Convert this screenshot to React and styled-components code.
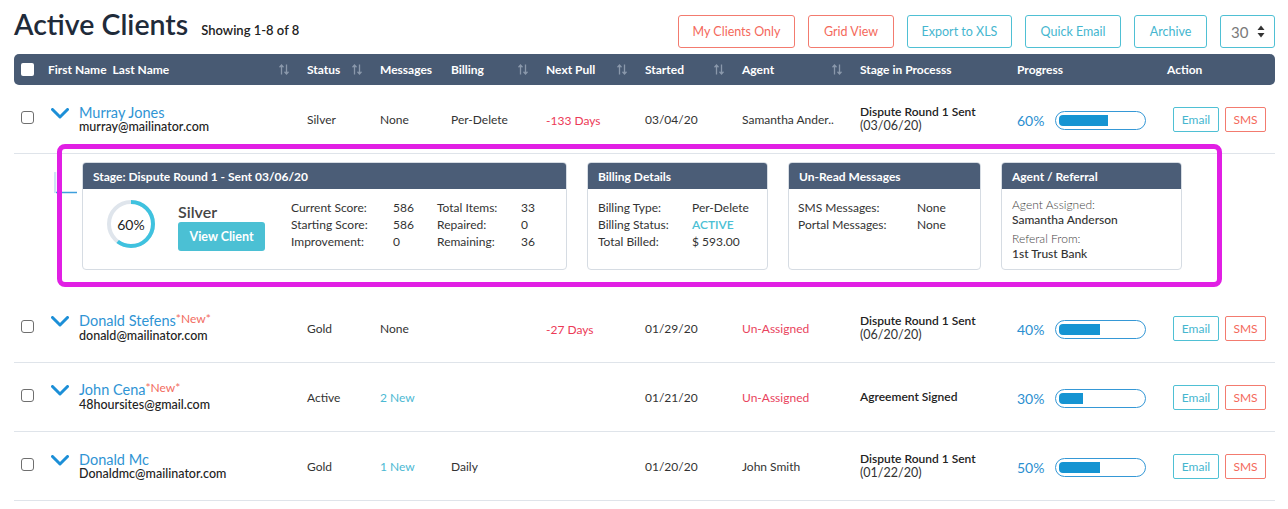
import React from "react";
import styled, { createGlobalStyle } from "styled-components";

const GlobalStyle = createGlobalStyle`
  body {
    margin: 0;
    background: #ffffff;
    font-family: Lato, "Open Sans", sans-serif;
    color: #333333;
  }
  button { font-family: Lato, "Open Sans", sans-serif; cursor: pointer; }
`;

const COLS = "34px 259px 73px 71px 95px 99px 97px 118px 157px 150px 1fr";

const Page = styled.div`
  padding: 0 13px 0 14px;
`;

const TopBar = styled.div`
  display: flex;
  justify-content: space-between;
  align-items: flex-start;
  height: 54px;
`;

const TitleWrap = styled.div`
  display: flex;
  align-items: baseline;
  gap: 13px;
  padding-top: 7px;
`;

const Title = styled.h1`
  margin: 0;
  font-size: 28.5px;
  line-height: 1.2;
  font-weight: 600;
  color: #1f2b3a;
`;

const Showing = styled.span`
  font-size: 13px;
  font-weight: 600;
  color: #222;
`;

const Toolbar = styled.div`
  display: flex;
  gap: 13px;
  padding-top: 15px;
`;

const ToolButton = styled.button`
  width: ${(p) => p.$w}px;
  height: 33px;
  padding: 0;
  background: #fff;
  border-radius: 3px;
  font-size: 12.5px;
  border: 1px solid ${(p) => (p.$tone === "red" ? "#f37b6f" : "#4fc0d4")};
  color: ${(p) => (p.$tone === "red" ? "#f4695b" : "#45b6cf")};
`;

const PageSize = styled.div`
  width: 55px;
  height: 33px;
  box-sizing: border-box;
  border: 1px solid #4fc0d4;
  border-radius: 3px;
  display: flex;
  align-items: center;
  justify-content: space-between;
  padding: 0 9px 0 10px;
  font-size: 15px;
  color: #7a7a7a;
`;

const HeadRow = styled.div`
  display: grid;
  grid-template-columns: ${COLS};
  height: 31px;
  align-items: center;
  background: #485a73;
  border-radius: 5px;
  color: #fff;
  font-size: 12px;
  font-weight: 700;
`;

const HeadCell = styled.div`
  display: flex;
  align-items: center;
  justify-content: space-between;
  padding-right: 18px;
  white-space: nowrap;
`;

const HeadCheck = styled.div`
  width: 13px;
  height: 13px;
  margin-left: 7px;
  background: #fff;
  border-radius: 2px;
`;

const NameHead = styled.span`
  display: flex;
  gap: 6px;
`;

const Row = styled.div`
  display: grid;
  grid-template-columns: ${COLS};
  height: 68px;
  align-items: center;
  border-bottom: 1px solid #dfe4ea;
  font-size: 12px;
  color: #333;
`;

const RowCheck = styled.div`
  width: 13px;
  height: 13px;
  margin: -3px 0 0 7px;
  border: 1px solid #6f6f6f;
  border-radius: 3px;
  box-sizing: border-box;
`;

const NameCell = styled.div`
  display: flex;
  align-items: flex-start;
  gap: 10px;
  padding-left: 3px;
`;

const Chevron = styled.svg`
  margin-top: 3px;
  flex: none;
`;

const NameBlock = styled.div`
  display: flex;
  flex-direction: column;
`;

const ClientName = styled.div`
  font-size: 14.5px;
  line-height: 15px;
  color: #2f94d4;
`;

const NewTag = styled.span`
  font-size: 12px;
  color: #f26c5f;
  position: relative;
  top: -3px;
`;

const Email = styled.div`
  font-size: 12.5px;
  line-height: 14px;
  color: #222;
  font-weight: 500;
`;

const Cell = styled.div`
  color: ${(p) => p.$color || "#333"};
  padding-top: ${(p) => (p.$low ? "3px" : "0")};
  white-space: nowrap;
`;

const StageCell = styled.div`
  line-height: 14px;
  color: #333;
  font-size: 12.5px;
`;

const StageTitle = styled.div`
  font-weight: 600;
  font-size: 12px;
  color: #222;
`;

const ProgressCell = styled.div`
  display: flex;
  align-items: center;
  gap: 12px;
`;

const Pct = styled.span`
  font-size: 14px;
  color: #2b8fd0;
  padding-top: 2px;
  width: 26px;
`;

const Bar = styled.div`
  width: 91px;
  height: 19px;
  box-sizing: border-box;
  border: 1.5px solid #3598d6;
  border-radius: 10px;
  padding: 2.5px 3px;
  margin-top: 3px;
`;

const BarFill = styled.div`
  height: 11px;
  background: #1594d2;
  border-radius: 4px 0 0 4px;
`;

const ActionCell = styled.div`
  display: flex;
  gap: 6px;
  padding-left: 6px;
`;

const ActionBtn = styled.button`
  width: ${(p) => p.$w}px;
  height: 25px;
  padding: 0;
  background: #fff;
  border-radius: 2px;
  font-size: 12px;
  border: 1px solid ${(p) => (p.$tone === "red" ? "#f37b6f" : "#4fc0d4")};
  color: ${(p) => (p.$tone === "red" ? "#f4695b" : "#45b6cf")};
`;

const Expanded = styled.div`
  position: relative;
  height: 140px;
  display: flex;
  align-items: flex-start;
  gap: 5px;
  padding: 8px 0 0 40px;
  box-sizing: border-box;
`;

const Highlight = styled.div`
  position: absolute;
  top: -10px;
  left: 43px;
  width: 1165px;
  height: 143px;
  box-sizing: border-box;
  border: 5px solid #e11fe4;
  border-radius: 8px;
  pointer-events: none;
`;

const Connector = styled.svg`
  margin-top: 10px;
  flex: none;
`;

const CardRow = styled.div`
  display: flex;
  gap: 20px;
`;

const Card = styled.div`
  width: ${(p) => p.$w}px;
  height: 108px;
  box-sizing: border-box;
  border: 1px solid #d6dce3;
  border-radius: 4px;
  overflow: hidden;
  background: #fff;
`;

const CardHead = styled.div`
  height: 26px;
  background: #4b5d77;
  color: #fff;
  font-size: 12px;
  font-weight: 700;
  display: flex;
  align-items: center;
  padding-left: 10px;
  white-space: nowrap;
`;

const StageBody = styled.div`
  display: flex;
  align-items: center;
  height: 50px;
  margin-top: 10px;
  padding-left: 24px;
`;

const Ring = styled.div`
  position: relative;
  width: 48px;
  height: 48px;
  display: flex;
  align-items: center;
  justify-content: center;
  font-size: 14px;
  color: #222;
  flex: none;
`;

const RingSvg = styled.svg`
  position: absolute;
  inset: 0;
`;

const TierBlock = styled.div`
  display: flex;
  flex-direction: column;
  gap: 1px;
  margin: 6px 26px 0 23px;
`;

const Tier = styled.div`
  font-size: 16px;
  line-height: 18px;
  font-weight: 600;
  color: #454545;
`;

const ViewButton = styled.button`
  width: 87px;
  height: 29px;
  border: none;
  border-radius: 3px;
  background: #4bc0d4;
  color: #fff;
  font-size: 12.5px;
  font-weight: 700;
`;

const InfoGrid = styled.div`
  display: grid;
  grid-template-columns: ${(p) => p.$cols};
  font-size: 12px;
  line-height: 17px;
  color: #333;
  padding: ${(p) => p.$pad || "0"};
`;

const Active = styled.span`
  color: #4bbfd4;
  font-weight: 600;
`;

const AgentBody = styled.div`
  padding: 8px 10px 0 10px;
  font-size: 12px;
  line-height: 15px;
`;

const AgentLabel = styled.div`
  color: #444;
  font-weight: 300;
  margin-top: ${(p) => (p.$gap ? "4px" : "0")};
`;

const AgentValue = styled.div`
  color: #333;
  font-weight: 500;
`;

const SortIcon = () => (
  <svg width="10" height="11" viewBox="0 0 10 11" fill="none" stroke="#8a98ab" strokeWidth="1.3">
    <path d="M2.5 10.5V1M0.5 3.2L2.5 1L4.5 3.2" />
    <path d="M7.5 0.5V10M5.5 7.8L7.5 10L9.5 7.8" />
  </svg>
);

const clients = [
  {
    name: "Murray Jones", email: "murray@mailinator.com", status: "Silver",
    messages: "None", billing: "Per-Delete", nextPull: "-133 Days", started: "03/04/20",
    agent: "Samantha Ander..", stage: "Dispute Round 1 Sent", stageDate: "(03/06/20)",
    pct: 60, fill: 49, expanded: true,
  },
  {
    name: "Donald Stefens", isNew: true, email: "donald@mailinator.com", status: "Gold",
    messages: "None", billing: "", nextPull: "-27 Days", started: "01/29/20",
    agent: "Un-Assigned", unassigned: true, stage: "Dispute Round 1 Sent", stageDate: "(06/20/20)",
    pct: 40, fill: 41,
  },
  {
    name: "John Cena", isNew: true, email: "48hoursites@gmail.com", status: "Active",
    messages: "2 New", newMsg: true, billing: "", nextPull: "", started: "01/21/20",
    agent: "Un-Assigned", unassigned: true, stage: "Agreement Signed", stageDate: "",
    pct: 30, fill: 24,
  },
  {
    name: "Donald Mc", email: "Donaldmc@mailinator.com", status: "Gold",
    messages: "1 New", newMsg: true, billing: "Daily", nextPull: "", started: "01/20/20",
    agent: "John Smith", stage: "Dispute Round 1 Sent", stageDate: "(01/22/20)",
    pct: 50, fill: 41,
  },
];

function ProgressRing({ value }) {
  const r = 22;
  const c = 2 * Math.PI * r;
  return (
    <Ring>
      <RingSvg width="48" height="48" viewBox="0 0 48 48">
        <circle cx="24" cy="24" r={r} fill="none" stroke="#dfe5ec" strokeWidth="4" />
        <circle
          cx="24" cy="24" r={r} fill="none" stroke="#3fc2df" strokeWidth="4"
          strokeDasharray={`${(c * value) / 100} ${c}`}
          transform="rotate(-90 24 24)"
        />
      </RingSvg>
      {value}%
    </Ring>
  );
}

function Details() {
  return (
    <Expanded>
      <Connector width="23" height="22" viewBox="0 0 23 22">
        <line x1="1" y1="0" x2="1" y2="21" stroke="#cfe5f4" strokeWidth="2.5" />
        <line x1="2" y1="20.5" x2="23" y2="20.5" stroke="#3e9fdc" strokeWidth="1.5" />
      </Connector>
      <CardRow>
        <Card $w={485}>
          <CardHead>Stage: Dispute Round 1 - Sent 03/06/20</CardHead>
          <StageBody>
            <ProgressRing value={60} />
            <TierBlock>
              <Tier>Silver</Tier>
              <ViewButton>View Client</ViewButton>
            </TierBlock>
            <InfoGrid $cols="102px 44px 84px auto">
              <span>Current Score:</span><span>586</span><span>Total Items:</span><span>33</span>
              <span>Starting Score:</span><span>586</span><span>Repaired:</span><span>0</span>
              <span>Improvement:</span><span>0</span><span>Remaining:</span><span>36</span>
            </InfoGrid>
          </StageBody>
        </Card>
        <Card $w={181}>
          <CardHead>Billing Details</CardHead>
          <InfoGrid $cols="94px auto" $pad="10px 0 0 10px">
            <span>Billing Type:</span><span>Per-Delete</span>
            <span>Billing Status:</span><Active>ACTIVE</Active>
            <span>Total Billed:</span><span>$ 593.00</span>
          </InfoGrid>
        </Card>
        <Card $w={193}>
          <CardHead>Un-Read Messages</CardHead>
          <InfoGrid $cols="119px auto" $pad="10px 0 0 9px">
            <span>SMS Messages:</span><span>None</span>
            <span>Portal Messages:</span><span>None</span>
          </InfoGrid>
        </Card>
        <Card $w={181}>
          <CardHead>Agent / Referral</CardHead>
          <AgentBody>
            <AgentLabel>Agent Assigned:</AgentLabel>
            <AgentValue>Samantha Anderson</AgentValue>
            <AgentLabel $gap>Referal From:</AgentLabel>
            <AgentValue>1st Trust Bank</AgentValue>
          </AgentBody>
        </Card>
      </CardRow>
      <Highlight />
    </Expanded>
  );
}

function ClientRow({ c }) {
  return (
    <Row>
      <RowCheck />
      <NameCell>
        <Chevron width="18" height="11" viewBox="0 0 18 11">
          <path d="M1.5 1.5L9 9L16.5 1.5" stroke="#1c8fd7" strokeWidth="3" fill="none" strokeLinecap="round" strokeLinejoin="round" />
        </Chevron>
        <NameBlock>
          <ClientName>
            {c.name}
            {c.isNew && <NewTag>*New*</NewTag>}
          </ClientName>
          <Email>{c.email}</Email>
        </NameBlock>
      </NameCell>
      <Cell>{c.status}</Cell>
      <Cell $color={c.newMsg ? "#4cb9d3" : "#333"}>{c.messages}</Cell>
      <Cell>{c.billing}</Cell>
      <Cell $color="#ec3a57" $low>{c.nextPull}</Cell>
      <Cell>{c.started}</Cell>
      <Cell $color={c.unassigned ? "#e9435d" : "#333"}>{c.agent}</Cell>
      <StageCell>
        <StageTitle>{c.stage}</StageTitle>
        {c.stageDate && <div>{c.stageDate}</div>}
      </StageCell>
      <ProgressCell>
        <Pct>{c.pct}%</Pct>
        <Bar>
          <BarFill style={{ width: c.fill }} />
        </Bar>
      </ProgressCell>
      <ActionCell>
        <ActionBtn $w={46}>Email</ActionBtn>
        <ActionBtn $w={41} $tone="red">SMS</ActionBtn>
      </ActionCell>
    </Row>
  );
}

export default function App() {
  return (
    <Page>
      <GlobalStyle />
      <TopBar>
        <TitleWrap>
          <Title>Active Clients</Title>
          <Showing>Showing 1-8 of 8</Showing>
        </TitleWrap>
        <Toolbar>
          <ToolButton $w={117} $tone="red">My Clients Only</ToolButton>
          <ToolButton $w={86} $tone="red">Grid View</ToolButton>
          <ToolButton $w={105}>Export to XLS</ToolButton>
          <ToolButton $w={96}>Quick Email</ToolButton>
          <ToolButton $w={73}>Archive</ToolButton>
          <PageSize>
            30
            <svg width="8" height="13" viewBox="0 0 8 13" fill="#333">
              <path d="M4 0.5L7.5 5H0.5Z" />
              <path d="M4 12.5L7.5 8H0.5Z" />
            </svg>
          </PageSize>
        </Toolbar>
      </TopBar>

      <HeadRow>
        <HeadCheck />
        <HeadCell>
          <NameHead><span>First Name</span><span>Last Name</span></NameHead>
          <SortIcon />
        </HeadCell>
        <HeadCell>Status <SortIcon /></HeadCell>
        <HeadCell>Messages</HeadCell>
        <HeadCell>Billing <SortIcon /></HeadCell>
        <HeadCell>Next Pull <SortIcon /></HeadCell>
        <HeadCell>Started <SortIcon /></HeadCell>
        <HeadCell>Agent <SortIcon /></HeadCell>
        <HeadCell>Stage in Processs</HeadCell>
        <HeadCell>Progress</HeadCell>
        <HeadCell>Action</HeadCell>
      </HeadRow>

      {clients.map((c) => (
        <React.Fragment key={c.email}>
          <ClientRow c={c} />
          {c.expanded && <Details />}
        </React.Fragment>
      ))}
    </Page>
  );
}
